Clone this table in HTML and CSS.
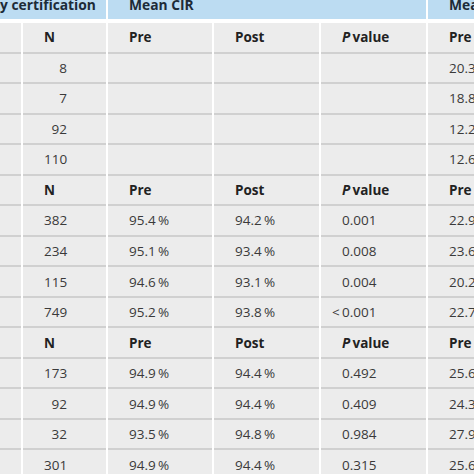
FILE: index.html
```html
<!DOCTYPE html>
<html lang="en">
<head>
<meta charset="utf-8">
<title>Mean CIR table</title>
<link rel="stylesheet" href="styles.css">
</head>
<body>
<div class="table">
  <div class="hd hd-a">y certification</div>
  <div class="hd hd-b">Mean CIR</div>
  <div class="hd hd-c">Mean ADR</div>

  <div class="c e"></div><div class="c b">N</div><div class="c b">Pre</div><div class="c b">Post</div><div class="c b"><i>P</i>&#8201;value</div><div class="c b">Pre</div>
  <div class="c e"></div><div class="c"><span class="n">8</span></div><div class="c"></div><div class="c"></div><div class="c"></div><div class="c">20.3&#8201;%</div>
  <div class="c e"></div><div class="c"><span class="n">7</span></div><div class="c"></div><div class="c"></div><div class="c"></div><div class="c">18.8&#8201;%</div>
  <div class="c e"></div><div class="c"><span class="n">92</span></div><div class="c"></div><div class="c"></div><div class="c"></div><div class="c">12.2&#8201;%</div>
  <div class="c e"></div><div class="c"><span class="n">110</span></div><div class="c"></div><div class="c"></div><div class="c"></div><div class="c">12.6&#8201;%</div>

  <div class="c e"></div><div class="c b">N</div><div class="c b">Pre</div><div class="c b">Post</div><div class="c b"><i>P</i>&#8201;value</div><div class="c b">Pre</div>
  <div class="c e"></div><div class="c"><span class="n">382</span></div><div class="c">95.4&#8201;%</div><div class="c">94.2&#8201;%</div><div class="c">0.001</div><div class="c">22.9&#8201;%</div>
  <div class="c e"></div><div class="c"><span class="n">234</span></div><div class="c">95.1&#8201;%</div><div class="c">93.4&#8201;%</div><div class="c">0.008</div><div class="c">23.6&#8201;%</div>
  <div class="c e"></div><div class="c"><span class="n">115</span></div><div class="c">94.6&#8201;%</div><div class="c">93.1&#8201;%</div><div class="c">0.004</div><div class="c">20.2&#8201;%</div>
  <div class="c e"></div><div class="c"><span class="n">749</span></div><div class="c">95.2&#8201;%</div><div class="c">93.8&#8201;%</div><div class="c"><span class="lt">&lt;&#8201;0.001</span></div><div class="c">22.7&#8201;%</div>

  <div class="c e"></div><div class="c b">N</div><div class="c b">Pre</div><div class="c b">Post</div><div class="c b"><i>P</i>&#8201;value</div><div class="c b">Pre</div>
  <div class="c e"></div><div class="c"><span class="n">173</span></div><div class="c">94.9&#8201;%</div><div class="c">94.4&#8201;%</div><div class="c">0.492</div><div class="c">25.6&#8201;%</div>
  <div class="c e"></div><div class="c"><span class="n">92</span></div><div class="c">94.9&#8201;%</div><div class="c">94.4&#8201;%</div><div class="c">0.409</div><div class="c">24.3&#8201;%</div>
  <div class="c e"></div><div class="c"><span class="n">32</span></div><div class="c">93.5&#8201;%</div><div class="c">94.8&#8201;%</div><div class="c">0.984</div><div class="c">27.9&#8201;%</div>
  <div class="c e"></div><div class="c"><span class="n">301</span></div><div class="c">94.9&#8201;%</div><div class="c">94.4&#8201;%</div><div class="c">0.315</div><div class="c">25.6&#8201;%</div>
</div>
</body>
</html>
```
FILE: styles.css
```css
html, body {
  margin: 0;
  padding: 0;
  background: #ffffff;
  overflow: hidden;
}
body {
  width: 474px;
  height: 474px;
  font-family: "Open Sans", "Noto Sans", sans-serif;
  font-size: 13.5px;
  color: #3a3a3a;
}
.table {
  display: grid;
  grid-template-columns: 21px 83px 104px 105px 105px 80px;
  column-gap: 2px;
  width: 520px;
}
.hd {
  height: 19px;
  margin-bottom: 4px;
  background: #bcdcf2;
  color: #1d2b38;
  font-weight: 700;
  font-size: 13.8px;
  line-height: 9px;
  white-space: nowrap;
  overflow: hidden;
}
.hd-a {
  grid-column: 1 / 3;
}
.hd-b {
  grid-column: 3 / 6;
  padding-left: 21px;
}
.hd-c {
  padding-left: 21px;
}
.c {
  height: 28.54px;
  border-bottom: 2px solid #d0d0d0;
  background: #ececec;
  display: flex;
  align-items: center;
  padding-left: 21px;
  white-space: nowrap;
  overflow: hidden;
}
.e {
  padding-left: 0;
}
.b {
  font-weight: 700;
  color: #222222;
}
.n {
  display: inline-block;
  width: 23px;
  text-align: right;
}
.lt {
  margin-left: -10px;
}
```
